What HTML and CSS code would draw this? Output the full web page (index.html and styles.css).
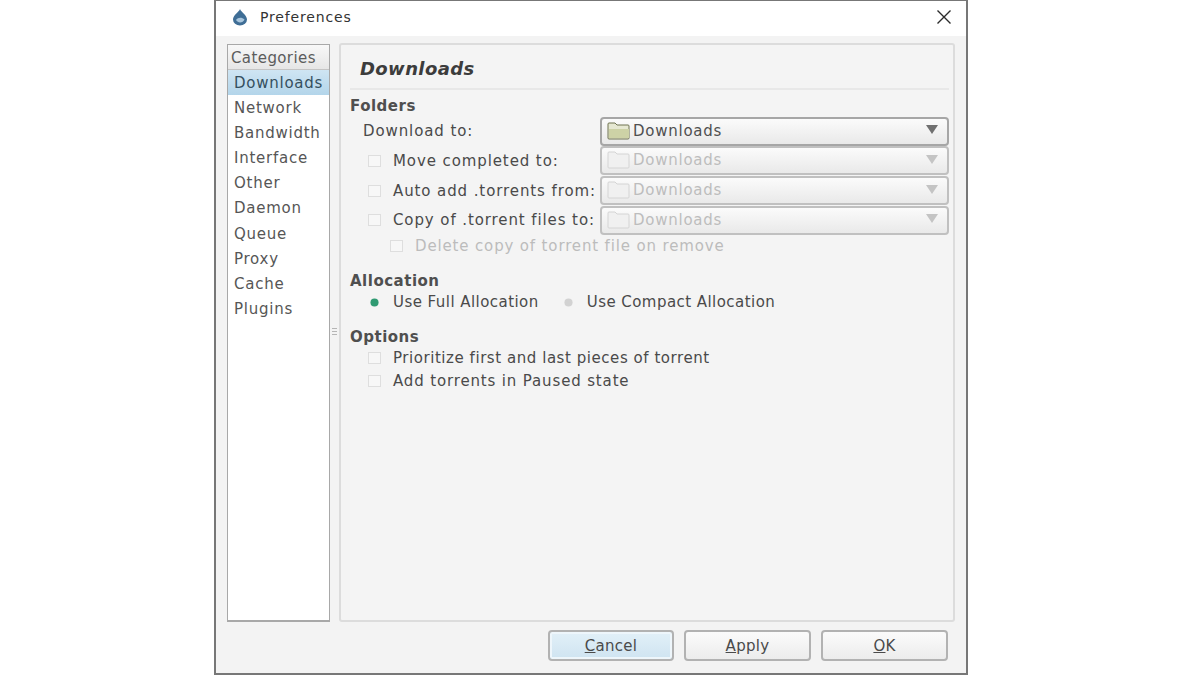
FILE: index.html
```html
<!DOCTYPE html>
<html lang="en">
<head>
<meta charset="utf-8">
<title>Preferences</title>
<link rel="stylesheet" href="styles.css">
</head>
<body>
<div class="window">
  <header class="titlebar">
    <svg class="app-icon" width="18" height="18" viewBox="0 0 18 18"><path d="M9 1 C10 4 16 7 16 11.5 A7 6 0 0 1 2 11.5 C2 7 8 4 9 1Z" fill="#3f6e96"/><path d="M5 12 C7 9 11 9 13.500 11.500 C12 15 7 15.500 5 12Z" fill="#a9c6dd"/></svg>
    <span class="title">Preferences</span>
    <svg class="close" width="16" height="16" viewBox="0 0 16 16"><path d="M1.500 1.500 L14.500 14.500 M14.500 1.500 L1.500 14.500" stroke="#2b2b2b" stroke-width="1.400" fill="none"/></svg>
  </header>
  <div class="content">
    <div class="panes">
      <nav class="sidebar">
        <div class="cat-head">Categories</div>
        <div class="cat selected">Downloads</div>
        <div class="cat">Network</div>
        <div class="cat">Bandwidth</div>
        <div class="cat">Interface</div>
        <div class="cat">Other</div>
        <div class="cat">Daemon</div>
        <div class="cat">Queue</div>
        <div class="cat">Proxy</div>
        <div class="cat">Cache</div>
        <div class="cat">Plugins</div>
      </nav>
      <div class="handle"><span></span><span></span><span></span></div>
      <main class="panel">
        <h1 class="page-title">Downloads</h1>
        <h2 class="section first">Folders</h2>
        <div class="row row-main">
          <span class="label label-plain">Download to:</span>
          <div class="combo">
            <svg class="folder" width="24" height="20" viewBox="0 0 24 20"><path d="M1 17 V3 Q1 2 2 2 H8 L10 4 H21 Q22 4 22 5 V17 Q22 18 21 18 H2 Q1 18 1 17Z" fill="#e6e8d2" stroke="#6f7350"/><path d="M2 17 V8 H22 V17Z" fill="#cdd2a6"/></svg>
            <span class="combo-text">Downloads</span>
            <span class="arrow"></span>
          </div>
        </div>
        <div class="row">
          <span class="box"></span><span class="label">Move completed to:</span>
          <div class="combo off">
            <svg class="folder" width="24" height="20" viewBox="0 0 24 20"><path d="M1 17 V3 Q1 2 2 2 H8 L10 4 H21 Q22 4 22 5 V17 Q22 18 21 18 H2 Q1 18 1 17Z" fill="#f0f0f0" stroke="#d4d4d4"/></svg>
            <span class="combo-text">Downloads</span>
            <span class="arrow"></span>
          </div>
        </div>
        <div class="row">
          <span class="box"></span><span class="label">Auto add .torrents from:</span>
          <div class="combo off">
            <svg class="folder" width="24" height="20" viewBox="0 0 24 20"><path d="M1 17 V3 Q1 2 2 2 H8 L10 4 H21 Q22 4 22 5 V17 Q22 18 21 18 H2 Q1 18 1 17Z" fill="#f0f0f0" stroke="#d4d4d4"/></svg>
            <span class="combo-text">Downloads</span>
            <span class="arrow"></span>
          </div>
        </div>
        <div class="row">
          <span class="box"></span><span class="label">Copy of .torrent files to:</span>
          <div class="combo off">
            <svg class="folder" width="24" height="20" viewBox="0 0 24 20"><path d="M1 17 V3 Q1 2 2 2 H8 L10 4 H21 Q22 4 22 5 V17 Q22 18 21 18 H2 Q1 18 1 17Z" fill="#f0f0f0" stroke="#d4d4d4"/></svg>
            <span class="combo-text">Downloads</span>
            <span class="arrow"></span>
          </div>
        </div>
        <div class="check nested disabled"><span class="box"></span><span>Delete copy of torrent file on remove</span></div>
        <h2 class="section alloc">Allocation</h2>
        <div class="radios">
          <span class="radio"><span class="dot on"></span>Use Full Allocation</span>
          <span class="radio"><span class="dot"></span>Use Compact Allocation</span>
        </div>
        <h2 class="section opts">Options</h2>
        <div class="check tight"><span class="box"></span><span>Prioritize first and last pieces of torrent</span></div>
        <div class="check"><span class="box"></span><span>Add torrents in Paused state</span></div>
      </main>
    </div>
    <footer class="buttons">
      <button class="btn focus"><u>C</u>ancel</button>
      <button class="btn"><u>A</u>pply</button>
      <button class="btn"><u>O</u>K</button>
    </footer>
  </div>
</div>
</body>
</html>
```

FILE: styles.css
```css
* { box-sizing: border-box; }
html, body { margin: 0; padding: 0; }
body {
  width: 1200px;
  height: 675px;
  background: #fff;
  overflow: hidden;
  font-family: "DejaVu Sans", sans-serif;
  font-size: 15px;
  color: #4a4a4a;
}
.window {
  margin-left: 214px;
  width: 754px;
  height: 675px;
  border: 2px solid #777;
  border-top-width: 1px;
  display: flex;
  flex-direction: column;
  background: #f3f3f3;
}
.titlebar {
  height: 35px;
  flex: none;
  background: #fff;
  display: flex;
  align-items: center;
  padding: 0 14px 3px 15px;
}
.app-icon { flex: none; margin-bottom: 1px; }
.title { margin-left: 11px; font-size: 14px; letter-spacing: 0.85px; color: #333; }
.close { margin-left: auto; }
.content {
  flex: 1;
  display: flex;
  flex-direction: column;
  padding: 7px 11px 12px 11px;
}
.panes { flex: 1; display: flex; }
.sidebar {
  width: 103px;
  margin-top: 1px;
  background: #fff;
  border: 1px solid #a8a8a8;
  border-bottom-width: 2px;
  flex: none;
}
.cat-head {
  height: 25px;
  line-height: 26px;
  padding-left: 3px;
  letter-spacing: 0.4px;
  background: linear-gradient(#f8f8f8, #e6e6e6);
  border-bottom: 1px solid #c4c4c4;
  color: #5c5c5c;
}
.cat { height: 25.1px; line-height: 27px; padding-left: 6px; letter-spacing: 0.75px; color: #565656; }
.cat.selected { background: linear-gradient(#cfe5f3, #b3d5ea); color: #35505f; }
.handle {
  width: 9px;
  flex: none;
  display: flex;
  flex-direction: column;
  justify-content: center;
  align-items: center;
  gap: 2px;
  padding-bottom: 3px;
}
.handle span { width: 5px; height: 1px; background: #b5b5b5; }
.panel {
  flex: 1;
  border: 2px solid #dcdcdc;
  border-radius: 3px;
  padding: 0 4px 0 9px;
  background: #f4f4f4;
}
.page-title {
  margin: 0;
  height: 45px;
  padding: 13px 0 0 10px;
  font-size: 18px;
  font-weight: bold;
  font-style: italic;
  line-height: 22px;
  letter-spacing: 0.4px;
  color: #3c3c3c;
  border-bottom: 2px solid #e8e8e8;
}
.section { margin: 0; font-size: 15px; font-weight: bold; line-height: 20px; letter-spacing: 0.5px; color: #4f4f4f; }
.section.first { margin-top: 7px; line-height: 19px; }
.section.alloc { margin-top: 14px; }
.section.opts { margin-top: 15px; line-height: 18px; }
.row { display: flex; align-items: center; height: 29.700px; padding-left: 18px; }
.row-main { padding-left: 13px; height: 30px; }
.label { margin-left: 12px; white-space: nowrap; letter-spacing: 0.9px; }
.label-plain { margin-left: 0; }
.box {
  width: 13px;
  height: 12px;
  flex: none;
  border: 1px solid #dedede;
  background: #f7f7f7;
}
.combo {
  margin-left: auto;
  width: 349px;
  height: 29px;
  flex: none;
  display: flex;
  align-items: center;
  padding: 0 9px 1px 5px;
  border: 2px solid #a6a6a6;
  border-radius: 4px;
  background: linear-gradient(#fbfbfb, #e9e9e9);
  color: #505050;
  letter-spacing: 0.75px;
}
.combo-text { margin-left: 2px; }
.arrow {
  margin-left: auto;
  margin-bottom: 2px;
  width: 0;
  height: 0;
  border-left: 6px solid transparent;
  border-right: 6px solid transparent;
  border-top: 9px solid #707070;
}
.combo.off { border-color: #c0c0c0; color: #bdbdbd; }
.combo.off .arrow { border-top-color: #c4c4c4; }
.check { display: flex; align-items: center; gap: 12px; height: 23px; padding-left: 18px; white-space: nowrap; letter-spacing: 0.85px; }
.check.tight { letter-spacing: 0.55px; }
.check.nested { padding-left: 40px; height: 22px; }
.check.disabled { color: #bcbcbc; }
.radios { display: flex; align-items: center; height: 22px; padding-left: 20px; gap: 25px; letter-spacing: 0.45px; }
.radio { display: flex; align-items: center; gap: 14px; }
.dot { width: 9px; height: 9px; border-radius: 50%; background: #d2d2d2; transform: scale(0.9); }
.dot.on { background: #2f9a72; }
.buttons { display: flex; justify-content: flex-end; gap: 10px; padding: 8px 7px 0 0; height: 39px; flex: none; }
.btn {
  width: 127px;
  height: 31px;
  font: inherit;
  letter-spacing: 0.3px;
  color: #4a4a4a;
  background: linear-gradient(#fbfbfb, #ececec);
  border: 2px solid #b2b2b2;
  border-radius: 4px;
  padding: 0;
}
.btn.focus {
  width: 126px;
  background: linear-gradient(#e2f0f8, #cfe4f1);
  box-shadow: inset 0 0 0 2px #eef6fb;
}
```
